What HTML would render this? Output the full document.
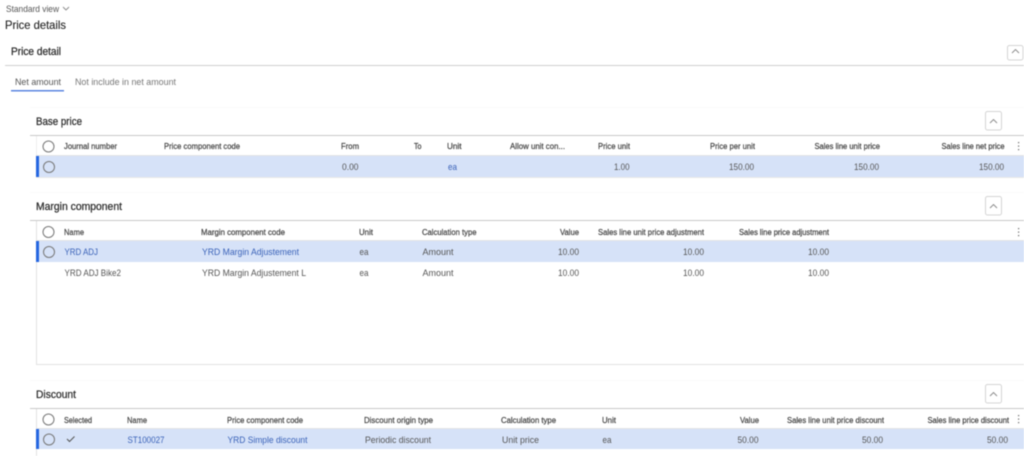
<!DOCTYPE html>
<html lang="en"><head><meta charset="utf-8"><title>Price details</title>
<style>
html,body{margin:0;padding:0;width:1024px;height:456px;overflow:hidden;background:#fff}
svg{display:block;filter:blur(.4px)}
text{font-family:"Liberation Sans",sans-serif;font-size:9.5px;fill:#555}
.h{font-size:8.5px;font-weight:400;fill:#444;stroke:#444;stroke-width:.22}
.s{font-size:11px;fill:#2b2b2b;font-weight:400;stroke:#2b2b2b;stroke-width:.25}
.l{fill:#3a62b8}
.g{fill:#777}
.c{fill:none;stroke:#777;stroke-width:1}
.b{fill:#fff;stroke:#d4d4d4;stroke-width:1}
.v{fill:none;stroke:#888;stroke-width:.9}
</style></head><body>
<svg width="1024" height="456" viewBox="0 0 1024 456" xmlns="http://www.w3.org/2000/svg">
<!-- top -->
<text x="6" y="12" textLength="53" lengthAdjust="spacingAndGlyphs">Standard view</text>
<path class="v" d="M63 7l3 3 3-3"/>
<text x="5" y="29" class="s" textLength="61" lengthAdjust="spacingAndGlyphs" style="font-size:12px;fill:#222;stroke-width:.12">Price details</text>
<text x="11" y="55" class="s" textLength="50" lengthAdjust="spacingAndGlyphs" style="font-size:11px">Price detail</text>
<rect x="5" y="65" width="1019" height="1" fill="#d0d0d0"/>
<rect class="b" x="1007.5" y="45.5" width="15.5" height="14.5" rx="2"/>
<path class="v" d="M1012 53l3.5-3.5 3.5 3.500"/>
<text x="15" y="85" textLength="46" lengthAdjust="spacingAndGlyphs">Net amount</text>
<text x="75" y="85" class="g" textLength="101" lengthAdjust="spacingAndGlyphs">Not include in net amount</text>
<rect x="11" y="90" width="53" height="1.5" fill="#5b86e0"/>

<!-- base price -->
<rect x="30" y="107" width="994" height="1" fill="#fafafa"/>
<text x="36" y="125" class="s" textLength="46" lengthAdjust="spacingAndGlyphs">Base price</text>
<rect class="b" x="985.5" y="111.5" width="16" height="18.5" rx="2"/>
<path class="v" d="M990 123l3.5-3.5 3.5 3.5"/>
<rect x="30" y="135" width="994" height="1" fill="#c8c8c8"/>
<rect x="36" y="136" width="1" height="20" fill="#eee"/>
<rect x="36" y="155" width="988" height="1" fill="#e4e4e4"/>
<rect x="36" y="156" width="988" height="21" fill="#d6e2f8"/>
<rect x="36" y="177" width="988" height="1" fill="#e8e8e8"/>
<rect x="36" y="156" width="3" height="21" fill="#2566e0"/>
<circle class="c" cx="48.5" cy="146.5" r="5.5"/>
<circle class="c" cx="49" cy="167" r="5.5"/>
<text class="h" x="64" y="149" textLength="53" lengthAdjust="spacingAndGlyphs">Journal number</text>
<text class="h" x="164" y="149" textLength="76" lengthAdjust="spacingAndGlyphs">Price component code</text>
<text class="h" x="341" y="149" textLength="18" lengthAdjust="spacingAndGlyphs">From</text>
<text class="h" x="414" y="149" textLength="7.5" lengthAdjust="spacingAndGlyphs">To</text>
<text class="h" x="447" y="149" textLength="14.5" lengthAdjust="spacingAndGlyphs">Unit</text>
<text class="h" x="510" y="149" textLength="55" lengthAdjust="spacingAndGlyphs">Allow unit con...</text>
<text class="h" x="598" y="149" textLength="32" lengthAdjust="spacingAndGlyphs">Price unit</text>
<text class="h" x="710" y="149" textLength="45" lengthAdjust="spacingAndGlyphs">Price per unit</text>
<text class="h" x="814.5" y="149" textLength="65.5" lengthAdjust="spacingAndGlyphs">Sales line unit price</text>
<text class="h" x="941.5" y="149" textLength="63" lengthAdjust="spacingAndGlyphs">Sales line net price</text>
<text x="342" y="170" textLength="16.5" lengthAdjust="spacingAndGlyphs">0.00</text>
<text x="448" y="170" class="l" textLength="9" lengthAdjust="spacingAndGlyphs">ea</text>
<text x="614" y="170" textLength="15.5" lengthAdjust="spacingAndGlyphs">1.00</text>
<text x="729" y="170" textLength="25" lengthAdjust="spacingAndGlyphs">150.00</text>
<text x="854" y="170" textLength="25" lengthAdjust="spacingAndGlyphs">150.00</text>
<text x="979" y="170" textLength="25" lengthAdjust="spacingAndGlyphs">150.00</text>
<g fill="#666"><rect x="1018" y="142" width="1.2" height="1.2"/><rect x="1018" y="145.5" width="1.2" height="1.2"/><rect x="1018" y="149" width="1.2" height="1.2"/></g>

<!-- margin -->
<rect x="30" y="192" width="994" height="1" fill="#fafafa"/>
<text x="36" y="210" class="s" textLength="86" lengthAdjust="spacingAndGlyphs">Margin component</text>
<rect class="b" x="985.5" y="196.5" width="16" height="18.5" rx="2"/>
<path class="v" d="M990 208l3.5-3.5 3.5 3.5"/>
<rect x="30" y="220" width="994" height="1" fill="#c8c8c8"/>
<rect x="36" y="221" width="1" height="144" fill="#e2e2e2"/>
<rect x="36" y="240" width="988" height="1" fill="#e4e4e4"/>
<rect x="36" y="241" width="988" height="21" fill="#d6e2f8"/>
<rect x="36" y="241" width="3" height="21" fill="#2566e0"/>
<rect x="36" y="364" width="988" height="1" fill="#e2e2e2"/>
<circle class="c" cx="48.5" cy="232" r="5.5"/>
<circle class="c" cx="49" cy="252" r="5.5"/>
<text class="h" x="64" y="235" textLength="20" lengthAdjust="spacingAndGlyphs">Name</text>
<text class="h" x="201" y="235" textLength="84" lengthAdjust="spacingAndGlyphs">Margin component code</text>
<text class="h" x="359" y="235" textLength="14" lengthAdjust="spacingAndGlyphs">Unit</text>
<text class="h" x="422" y="235" textLength="54.5" lengthAdjust="spacingAndGlyphs">Calculation type</text>
<text class="h" x="560" y="235" textLength="19" lengthAdjust="spacingAndGlyphs">Value</text>
<text class="h" x="598" y="235" textLength="106" lengthAdjust="spacingAndGlyphs">Sales line unit price adjustment</text>
<text class="h" x="739" y="235" textLength="90" lengthAdjust="spacingAndGlyphs">Sales line price adjustment</text>
<text x="64.5" y="255" class="l" textLength="33.5" lengthAdjust="spacingAndGlyphs">YRD ADJ</text>
<text x="202" y="255" class="l" textLength="97" lengthAdjust="spacingAndGlyphs">YRD Margin Adjustement</text>
<text x="359.5" y="255" textLength="9" lengthAdjust="spacingAndGlyphs">ea</text>
<text x="422.5" y="255" textLength="31" lengthAdjust="spacingAndGlyphs">Amount</text>
<text x="558" y="255" textLength="21" lengthAdjust="spacingAndGlyphs">10.00</text>
<text x="683" y="255" textLength="21" lengthAdjust="spacingAndGlyphs">10.00</text>
<text x="808" y="255" textLength="21" lengthAdjust="spacingAndGlyphs">10.00</text>
<text x="64.5" y="276" textLength="56.5" lengthAdjust="spacingAndGlyphs">YRD ADJ Bike2</text>
<text x="202" y="276" textLength="104" lengthAdjust="spacingAndGlyphs">YRD Margin Adjustement L</text>
<text x="359.5" y="276" textLength="9" lengthAdjust="spacingAndGlyphs">ea</text>
<text x="422.5" y="276" textLength="31" lengthAdjust="spacingAndGlyphs">Amount</text>
<text x="558" y="276" textLength="21" lengthAdjust="spacingAndGlyphs">10.00</text>
<text x="683" y="276" textLength="21" lengthAdjust="spacingAndGlyphs">10.00</text>
<text x="808" y="276" textLength="21" lengthAdjust="spacingAndGlyphs">10.00</text>
<g fill="#666"><rect x="1018" y="228" width="1.2" height="1.2"/><rect x="1018" y="231.5" width="1.2" height="1.2"/><rect x="1018" y="235" width="1.2" height="1.2"/></g>

<!-- discount -->
<rect x="30" y="380" width="994" height="1" fill="#fafafa"/>
<text x="36" y="398" class="s" textLength="40" lengthAdjust="spacingAndGlyphs">Discount</text>
<rect class="b" x="985.5" y="384.5" width="16" height="18.5" rx="2"/>
<path class="v" d="M990 396l3.5-3.5 3.5 3.5"/>
<rect x="30" y="408" width="994" height="1" fill="#c8c8c8"/>
<rect x="36" y="409" width="1" height="47" fill="#e2e2e2"/>
<rect x="36" y="428" width="988" height="1" fill="#e4e4e4"/>
<rect x="36" y="429" width="988" height="20" fill="#d6e2f8"/>
<rect x="36" y="429" width="3" height="20" fill="#2566e0"/>
<circle class="c" cx="48.5" cy="419.5" r="5.5"/>
<circle class="c" cx="49" cy="439.5" r="5.5"/>
<path d="M67 439l2.5 2.5 5-5" fill="none" stroke="#555" stroke-width="1"/>
<text class="h" x="64" y="423" textLength="28" lengthAdjust="spacingAndGlyphs">Selected</text>
<text class="h" x="127" y="423" textLength="20" lengthAdjust="spacingAndGlyphs">Name</text>
<text class="h" x="227" y="423" textLength="76" lengthAdjust="spacingAndGlyphs">Price component code</text>
<text class="h" x="364" y="423" textLength="69" lengthAdjust="spacingAndGlyphs">Discount origin type</text>
<text class="h" x="501" y="423" textLength="55" lengthAdjust="spacingAndGlyphs">Calculation type</text>
<text class="h" x="602" y="423" textLength="14" lengthAdjust="spacingAndGlyphs">Unit</text>
<text class="h" x="740" y="423" textLength="19" lengthAdjust="spacingAndGlyphs">Value</text>
<text class="h" x="787" y="423" textLength="97" lengthAdjust="spacingAndGlyphs">Sales line unit price discount</text>
<text class="h" x="927.5" y="423" textLength="81.5" lengthAdjust="spacingAndGlyphs">Sales line price discount</text>
<text x="127.5" y="443" class="l" textLength="37" lengthAdjust="spacingAndGlyphs">ST100027</text>
<text x="227.5" y="443" class="l" textLength="80" lengthAdjust="spacingAndGlyphs">YRD Simple discount</text>
<text x="365" y="443" textLength="66" lengthAdjust="spacingAndGlyphs">Periodic discount</text>
<text x="502" y="443" textLength="37" lengthAdjust="spacingAndGlyphs">Unit price</text>
<text x="602.5" y="443" textLength="9" lengthAdjust="spacingAndGlyphs">ea</text>
<text x="737.5" y="443" textLength="21" lengthAdjust="spacingAndGlyphs">50.00</text>
<text x="862" y="443" textLength="21" lengthAdjust="spacingAndGlyphs">50.00</text>
<text x="987" y="443" textLength="21" lengthAdjust="spacingAndGlyphs">50.00</text>
<g fill="#666"><rect x="1018" y="415" width="1.2" height="1.2"/><rect x="1018" y="418.5" width="1.2" height="1.2"/><rect x="1018" y="422" width="1.2" height="1.2"/></g>
</svg>
</body></html>
